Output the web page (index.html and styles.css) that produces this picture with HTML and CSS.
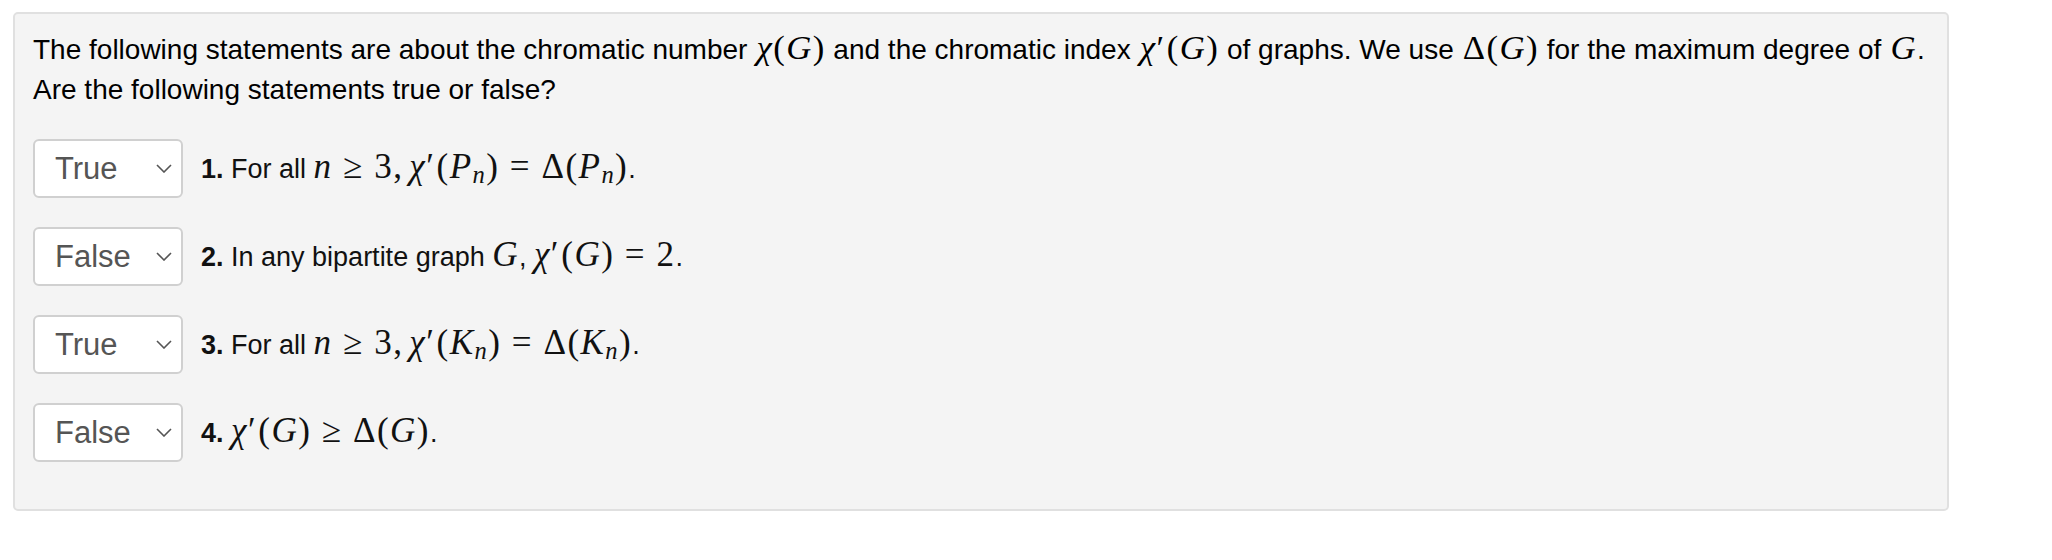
FILE: index.html
```html
<!DOCTYPE html>
<html>
<head>
<meta charset="utf-8">
<link rel="stylesheet" href="styles.css">
</head>
<body>
<div class="que">
  <div class="qtext">The following statements are about the chromatic number <span class="m"><i>χ</i>(<i>G</i>)</span> and the chromatic index <span class="m"><i>χ</i><span class="pr">′</span>(<i>G</i>)</span> of graphs. We use <span class="m">Δ(<i>G</i>)</span> for the maximum degree of <span class="m"><i>G</i></span>.<br>Are the following statements true or false?</div>
  <div class="answers">
    <div class="row">
      <div class="sel"><span class="val">True</span><svg class="chev" width="16" height="9" viewBox="0 0 16 9"><polyline points="1,1 8,8 15,1" /></svg></div>
      <div class="stmt"><b>1.</b> For all <span class="m"><i>n</i><span class="rel">≥</span>3,<span class="sp"></span><i>χ</i><span class="pr">′</span>(<i>P</i><sub>n</sub>)<span class="rel">=</span>Δ(<i>P</i><sub>n</sub>)</span>.</div>
    </div>
    <div class="row">
      <div class="sel"><span class="val">False</span><svg class="chev" width="16" height="9" viewBox="0 0 16 9"><polyline points="1,1 8,8 15,1" /></svg></div>
      <div class="stmt"><b>2.</b> In any bipartite graph <span class="m"><i>G</i></span>, <span class="m"><i>χ</i><span class="pr">′</span>(<i>G</i>)<span class="rel">=</span>2</span>.</div>
    </div>
    <div class="row">
      <div class="sel"><span class="val">True</span><svg class="chev" width="16" height="9" viewBox="0 0 16 9"><polyline points="1,1 8,8 15,1" /></svg></div>
      <div class="stmt"><b>3.</b> For all <span class="m"><i>n</i><span class="rel">≥</span>3,<span class="sp"></span><i>χ</i><span class="pr">′</span>(<i>K</i><sub>n</sub>)<span class="rel">=</span>Δ(<i>K</i><sub>n</sub>)</span>.</div>
    </div>
    <div class="row">
      <div class="sel"><span class="val">False</span><svg class="chev" width="16" height="9" viewBox="0 0 16 9"><polyline points="1,1 8,8 15,1" /></svg></div>
      <div class="stmt"><b>4.</b> <span class="m"><i>χ</i><span class="pr">′</span>(<i>G</i>)<span class="rel">≥</span>Δ(<i>G</i>)</span>.</div>
    </div>
  </div>
</div>
</body>
</html>
```
FILE: styles.css
```css
html, body {
  margin: 0;
  padding: 0;
  background: #ffffff;
}
body {
  font-family: "Liberation Sans", Arial, sans-serif;
  color: #000;
}
.que {
  box-sizing: border-box;
  margin: 12px 0 0 13px;
  width: 1936px;
  height: 499px;
  background: #f4f4f4;
  border: 2px solid #e0e0e0;
  border-radius: 5px;
  padding: 16px 18px 0 18px;
}
.qtext {
  font-size: 28px;
  line-height: 40px;
}
.m {
  font-family: "Liberation Serif", "DejaVu Serif", serif;
  font-size: 1.24em;
  line-height: 0;
  letter-spacing: 0.04em;
  white-space: nowrap;
  margin-left: 0.04em;
}
.m i {
  font-style: italic;
}
.m .pr {
  font-style: normal;
  margin-right: 0.04em;
}
.m sub {
  font-style: italic;
  font-size: 0.7em;
  line-height: 0;
  vertical-align: -0.2em;
}
.m .rel {
  margin: 0 0.3em;
}
.m .sp {
  display: inline-block;
  width: 0.17em;
}
.answers {
  margin-top: 29px;
  display: flex;
  flex-direction: column;
  gap: 29px;
}
.row {
  display: flex;
  align-items: center;
  gap: 18px;
}
.sel {
  box-sizing: border-box;
  width: 150px;
  height: 59px;
  background: #fff;
  border: 2px solid #d0d0d0;
  border-radius: 6px;
  display: flex;
  align-items: center;
  justify-content: space-between;
  padding: 0 9px 0 20px;
  font-size: 31px;
  color: #555;
  flex: none;
}
.chev polyline {
  fill: none;
  stroke: #555;
  stroke-width: 1.6;
}
.stmt {
  font-size: 27px;
  line-height: 40px;
  color: #111;
}
.stmt .m {
  font-size: 1.3em;
  letter-spacing: 0.04em;
  margin-left: 0;
}
.stmt b {
  font-weight: bold;
}
```
